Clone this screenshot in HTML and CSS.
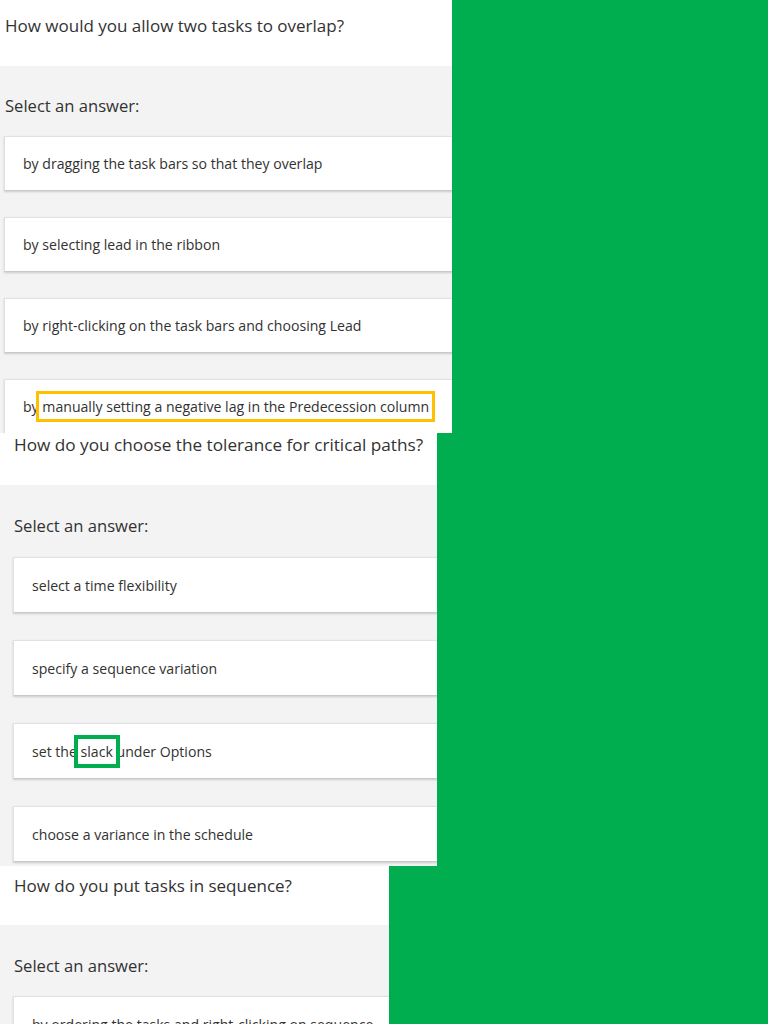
FILE: index.html
```html
<!DOCTYPE html>
<html lang="en">
<head>
  <meta charset="UTF-8" />
  <title>Quiz answers</title>
  <meta name="viewport" content="width=device-width, initial-scale=1" />
  <link rel="stylesheet" href="styles.css">
</head>
<body>
  <main class="stack">

    <!-- Question 1 -->
    <section class="shot shot-1">
      <header class="question">How would you allow two tasks to overlap?</header>
      <div class="answers">
        <p class="prompt">Select an answer:</p>
        <ul class="options">
          <li class="option"><span>by dragging the task bars so that they overlap</span></li>
          <li class="option"><span>by selecting lead in the ribbon</span></li>
          <li class="option"><span>by right-clicking on the task bars and choosing Lead</span></li>
          <li class="option"><span>by <span class="mark mark-yellow">manually setting a negative lag in the Predecession column</span></span></li>
        </ul>
      </div>
    </section>

    <!-- Question 2 -->
    <section class="shot shot-2">
      <header class="question">How do you choose the tolerance for critical paths?</header>
      <div class="answers">
        <p class="prompt">Select an answer:</p>
        <ul class="options">
          <li class="option"><span>select a time flexibility</span></li>
          <li class="option"><span>specify a sequence variation</span></li>
          <li class="option"><span>set the <span class="mark mark-green">slack</span> under Options</span></li>
          <li class="option"><span>choose a variance in the schedule</span></li>
        </ul>
      </div>
    </section>

    <!-- Question 3 -->
    <section class="shot shot-3">
      <header class="question">How do you put tasks in sequence?</header>
      <div class="answers">
        <p class="prompt">Select an answer:</p>
        <ul class="options">
          <li class="option"><span>by ordering the tasks and right-clicking on sequence</span></li>
        </ul>
      </div>
    </section>

  </main>
</body>
</html>
```

FILE: styles.css
```css
:root {
  --green: #00ae4f;
  --gray: #f3f3f3;
  --txt: #323232;
  --yellow: #ffc000;
  font-family: 'Open Sans', 'Noto Sans', sans-serif;
}
* { box-sizing: border-box; margin: 0; padding: 0; }
body {
  min-height: 100vh;
  background: var(--green);
  color: var(--txt);
  overflow: hidden;
}
.stack { display: flex; flex-direction: column; align-items: flex-start; }

/* one cropped screenshot of a question */
.shot {
  display: flex;
  flex-direction: column;
  overflow: hidden;
  background: var(--gray);
}
.question {
  background: #fff;
  font-size: 17px;
  line-height: 24px;
  white-space: nowrap;
  flex-shrink: 0;
}
.answers { flex: 1; }
.prompt { font-size: 16.6px; line-height: 24px; }
.options {
  list-style: none;
  display: flex;
  flex-direction: column;
  margin-right: -30px;
}
.option {
  display: flex;
  align-items: center;
  height: 55px;
  background: #fff;
  border: 1px solid #e1e1e1;
  border-bottom-color: #c9c9c9;
  box-shadow: 0 1px 2px #0000002a;
  font-size: 14.1px;
  white-space: nowrap;
}

/* annotation boxes drawn over the text */
.mark-yellow { outline: 3px solid var(--yellow); outline-offset: 3px; }
.mark-green { outline: 4px solid var(--green); outline-offset: 3px; }

/* crop sizes of each screenshot */
.shot-1 { width: 452px; height: 433px; }
.shot-1 .question { height: 66px; padding: 14px 5px 0; }
.shot-1 .prompt { padding: 28px 5px 0; }
.shot-1 .options { gap: 26px; margin-top: 18px; margin-left: 4px; }
.shot-1 .option { padding-left: 18px; }

.shot-2 { width: 437px; height: 433px; }
.shot-2 .question { height: 52px; padding: 0 14px; font-size: 17.2px; }
.shot-2 .prompt { padding: 29px 14px 0; }
.shot-2 .options { gap: 27px; margin-top: 19px; margin-left: 13px; }
.shot-2 .option { height: 56px; padding-left: 18px; }

.shot-3 { width: 389px; height: 158px; }
.shot-3 .question { height: 59px; padding: 8px 14px 0; }
.shot-3 .prompt { padding: 29px 14px 0; }
.shot-3 .options { margin-top: 18px; margin-left: 13px; }
.shot-3 .option { height: 56px; padding-left: 18px; }
```
